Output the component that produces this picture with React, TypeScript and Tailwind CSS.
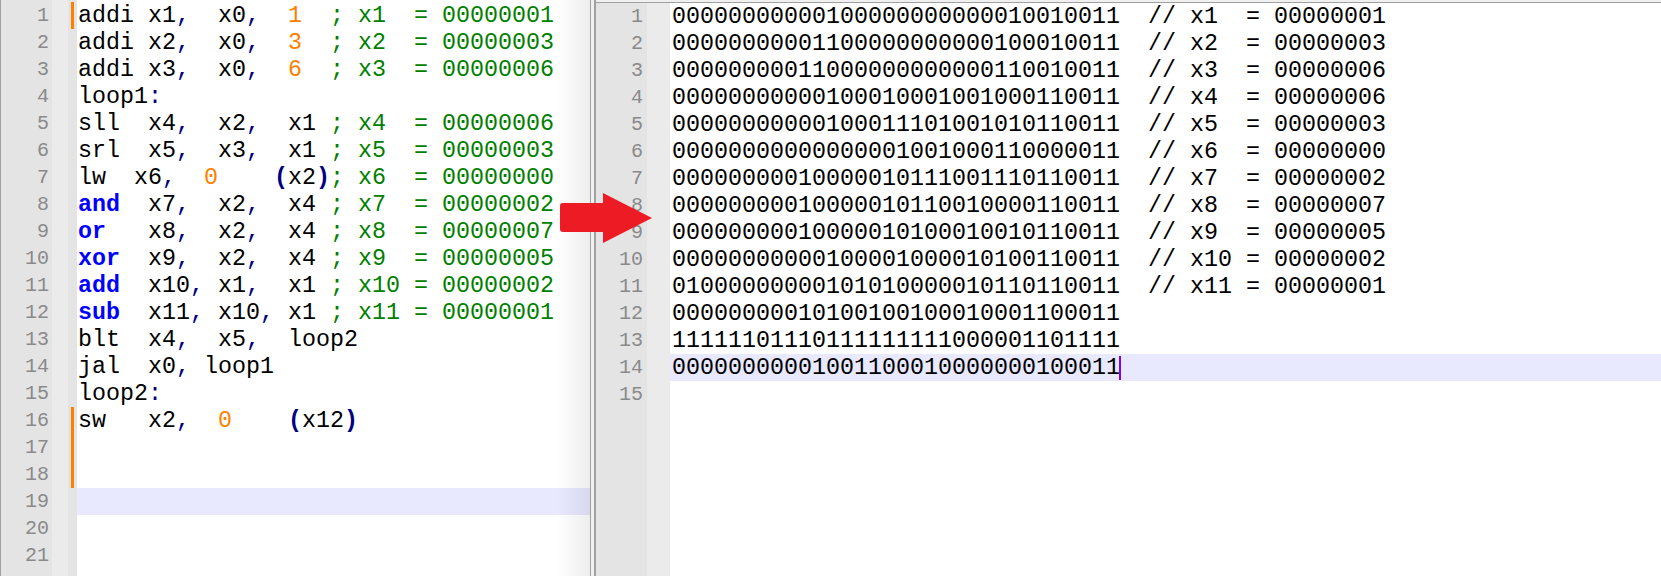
type Tok = [string, string?];

const mono = "font-['Liberation_Mono','Courier_New',monospace]";

const P = "text-[#000080]";
const B = "text-[#000080] font-bold";
const N = "text-[#ff8000]";
const C = "text-[#008000]";
const I = "text-[#0000ff] font-bold";

const asm: Tok[][] = [
  [["addi x1"], [",", P], ["  x0"], [",", P], ["  "], ["1", N], ["  "], ["; x1  = 00000001", C]],
  [["addi x2"], [",", P], ["  x0"], [",", P], ["  "], ["3", N], ["  "], ["; x2  = 00000003", C]],
  [["addi x3"], [",", P], ["  x0"], [",", P], ["  "], ["6", N], ["  "], ["; x3  = 00000006", C]],
  [["loop1"], [":", P]],
  [["sll  x4"], [",", P], ["  x2"], [",", P], ["  x1 "], ["; x4  = 00000006", C]],
  [["srl  x5"], [",", P], ["  x3"], [",", P], ["  x1 "], ["; x5  = 00000003", C]],
  [["lw  x6"], [",", P], ["  "], ["0", N], ["    "], ["(", B], ["x2"], [")", B], ["; x6  = 00000000", C]],
  [["and", I], ["  x7"], [",", P], ["  x2"], [",", P], ["  x4 "], ["; x7  = 00000002", C]],
  [["or", I], ["   x8"], [",", P], ["  x2"], [",", P], ["  x4 "], ["; x8  = 00000007", C]],
  [["xor", I], ["  x9"], [",", P], ["  x2"], [",", P], ["  x4 "], ["; x9  = 00000005", C]],
  [["add", I], ["  x10"], [",", P], [" x1"], [",", P], ["  x1 "], ["; x10 = 00000002", C]],
  [["sub", I], ["  x11"], [",", P], [" x10"], [",", P], [" x1 "], ["; x11 = 00000001", C]],
  [["blt  x4"], [",", P], ["  x5"], [",", P], ["  loop2"]],
  [["jal  x0"], [",", P], [" loop1"]],
  [["loop2"], [":", P]],
  [["sw   x2"], [",", P], ["  "], ["0", N], ["    "], ["(", B], ["x12"], [")", B]],
  [],
  [],
  [],
  [],
  [],
];

const changed = [1, 16, 17, 18];

const bin = [
  "00000000000100000000000010010011  // x1  = 00000001",
  "00000000001100000000000100010011  // x2  = 00000003",
  "00000000011000000000000110010011  // x3  = 00000006",
  "00000000000100010001001000110011  // x4  = 00000006",
  "00000000000100011101001010110011  // x5  = 00000003",
  "00000000000000001001000110000011  // x6  = 00000000",
  "00000000010000010111001110110011  // x7  = 00000002",
  "00000000010000010110010000110011  // x8  = 00000007",
  "00000000010000010100010010110011  // x9  = 00000005",
  "00000000000100001000010100110011  // x10 = 00000002",
  "01000000000101010000010110110011  // x11 = 00000001",
  "00000000010100100100010001100011",
  "11111101110111111111000001101111",
  "00000000001001100010000000100011",
  "",
];

function Numbers({ count, pr }: { count: number; pr: string }) {
  return (
    <>
      {Array.from({ length: count }, (_, i) => (
        <div
          key={i}
          className={`flex h-[27px] items-center justify-end ${pr} text-[20px] text-[#8a8a8a] ${mono}`}
        >
          {i + 1}
        </div>
      ))}
    </>
  );
}

export default function App() {
  return (
    <div className="relative flex h-[576px] w-[1661px] overflow-hidden bg-white">
      {/* left editor: assembly source */}
      <div className="relative flex h-full w-[591px] shrink-0 border-x border-[#a0a0a0] bg-white">
        <div className="w-[51px] shrink-0 bg-[#e4e4e4] pt-[2px]">
          <Numbers count={21} pr="pr-[3px]" />
        </div>
        <div className="w-[16px] shrink-0 bg-[#ebebeb]" />
        <div className="w-[9px] shrink-0 bg-[#e4e4e4] pt-[2px]">
          {asm.map((_, i) => (
            <div key={i} className="h-[27px]">
              {changed.includes(i + 1) && (
                <div className="ml-[3px] h-full w-[3px] bg-[#ff8000]" />
              )}
            </div>
          ))}
        </div>
        <div className={`min-w-0 flex-1 pt-[2px] text-[23.33px] text-black ${mono}`}>
          {asm.map((toks, i) => (
            <div
              key={i}
              className={`h-[27px] whitespace-pre pl-[1px] pt-[1px] leading-[27px] ${
                i === 18 ? "bg-[#e8e8ff]" : ""
              }`}
            >
              {toks.map(([t, cls], j) => (
                <span key={j} className={cls ?? ""}>
                  {t}
                </span>
              ))}
            </div>
          ))}
        </div>
        <div className="pointer-events-none absolute right-0 top-0 h-full w-[34px] bg-linear-to-r from-transparent to-black/[0.07]" />
      </div>

      <div className="w-[3px] shrink-0 bg-[#f0f0f0]" />

      {/* right editor: machine code */}
      <div className="flex h-full flex-1 flex-col border-l-2 border-[#a0a0a0] bg-[#f0f0f0] pt-[2px]">
        <div className="flex flex-1 border-t border-[#a0a0a0] bg-white">
          <div className="w-[51px] shrink-0 bg-[#e4e4e4]">
            <Numbers count={15} pr="pr-[4px]" />
          </div>
          <div className="w-[23px] shrink-0 bg-[#ebebeb]" />
          <div className={`min-w-0 flex-1 text-[23.33px] text-black ${mono}`}>
            {bin.map((line, i) => (
              <div
                key={i}
                className={`flex h-[27px] items-center whitespace-pre pl-[2px] pt-[1px] leading-[27px] ${
                  i === 13 ? "bg-[#e8e8ff]" : ""
                }`}
              >
                {line}
                {i === 13 && (
                  <span className="-ml-[1px] inline-block h-[24px] w-[2px] bg-[#8000ff]" />
                )}
              </div>
            ))}
          </div>
        </div>
      </div>

      {/* red arrow between the panes */}
      <svg
        className="absolute left-[556px] top-[190px]"
        width="100"
        height="56"
        viewBox="0 0 100 56"
      >
        <rect x="4" y="13" width="46" height="29" rx="3" fill="#ed1c24" />
        <polygon points="47,3 96,28 47,53" fill="#ed1c24" />
      </svg>
    </div>
  );
}
